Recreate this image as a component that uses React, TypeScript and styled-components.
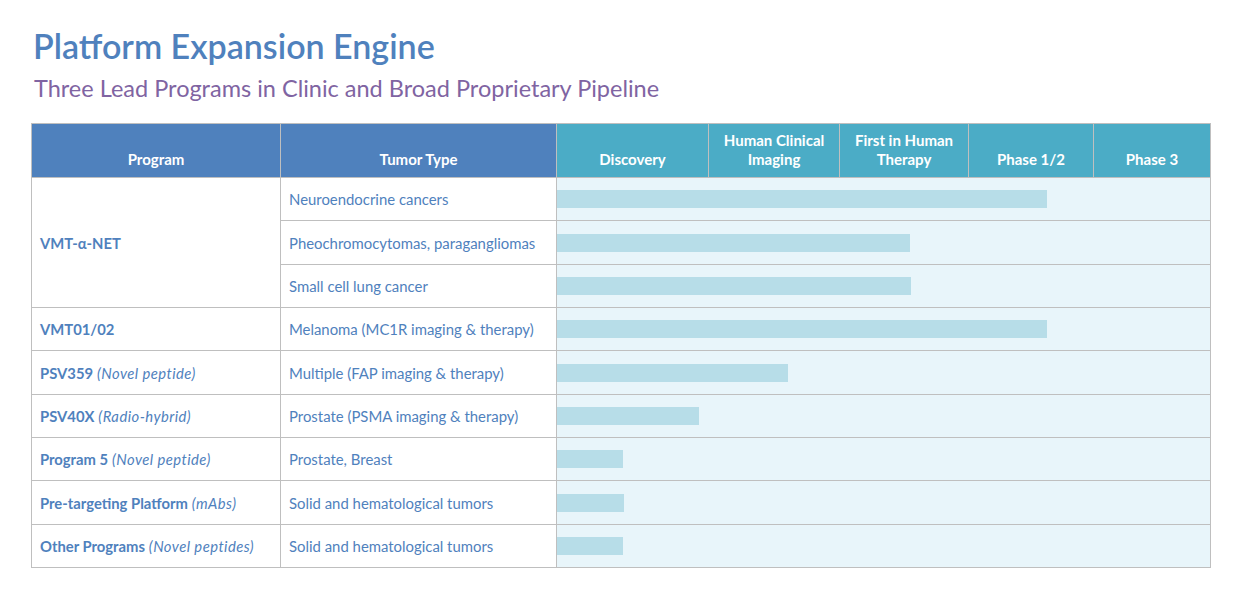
import styled, { createGlobalStyle } from 'styled-components'

const GlobalStyle = createGlobalStyle`
  body {
    margin: 0;
    background: #ffffff;
    font-family: Lato, "Open Sans", sans-serif;
  }
`

type Program = {
  name: string
  note?: string
  tumors: { label: string; bar: number }[]
}

const programs: Program[] = [
  {
    name: 'VMT-α-NET',
    tumors: [
      { label: 'Neuroendocrine cancers', bar: 490 },
      { label: 'Pheochromocytomas, paragangliomas', bar: 353 },
      { label: 'Small cell lung cancer', bar: 354 },
    ],
  },
  {
    name: 'VMT01/02',
    tumors: [{ label: 'Melanoma (MC1R imaging & therapy)', bar: 490 }],
  },
  {
    name: 'PSV359',
    note: '(Novel peptide)',
    tumors: [{ label: 'Multiple (FAP imaging & therapy)', bar: 231 }],
  },
  {
    name: 'PSV40X',
    note: '(Radio-hybrid)',
    tumors: [{ label: 'Prostate (PSMA imaging & therapy)', bar: 142 }],
  },
  {
    name: 'Program 5',
    note: '(Novel peptide)',
    tumors: [{ label: 'Prostate, Breast', bar: 66 }],
  },
  {
    name: 'Pre-targeting Platform',
    note: '(mAbs)',
    tumors: [{ label: 'Solid and hematological tumors', bar: 67 }],
  },
  {
    name: 'Other Programs',
    note: '(Novel peptides)',
    tumors: [{ label: 'Solid and hematological tumors', bar: 66 }],
  },
]

const phases = [
  { label: ['Discovery'], width: 152 },
  { label: ['Human Clinical', 'Imaging'], width: 131 },
  { label: ['First in Human', 'Therapy'], width: 129 },
  { label: ['Phase 1/2'], width: 125 },
  { label: ['Phase 3'], width: 117 },
]

export default function App() {
  return (
    <Page>
      <GlobalStyle />
      <Title>Platform Expansion Engine</Title>
      <Subtitle>Three Lead Programs in Clinic and Broad Proprietary Pipeline</Subtitle>

      <PipelineTable>
        <colgroup>
          <col style={{ width: 249 }} />
          <col style={{ width: 276 }} />
          {phases.map((p) => (
            <col key={p.label.join(' ')} style={{ width: p.width }} />
          ))}
        </colgroup>
        <thead>
          <tr>
            <HeadCell>Program</HeadCell>
            <HeadCell>Tumor Type</HeadCell>
            {phases.map((p) => (
              <HeadCell key={p.label.join(' ')} $phase>
                {p.label.map((line, i) => (
                  <span key={line}>
                    {i > 0 && <br />}
                    {line}
                  </span>
                ))}
              </HeadCell>
            ))}
          </tr>
        </thead>
        <tbody>
          {programs.map((program) =>
            program.tumors.map((tumor, i) => (
              <tr key={program.name + tumor.label}>
                {i === 0 && (
                  <ProgramCell rowSpan={program.tumors.length}>
                    <strong>{program.name}</strong>
                    {program.note && <em> {program.note}</em>}
                  </ProgramCell>
                )}
                <TumorCell>{tumor.label}</TumorCell>
                <ChartCell colSpan={5}>
                  <Bar style={{ width: tumor.bar }} />
                </ChartCell>
              </tr>
            ))
          )}
        </tbody>
      </PipelineTable>
    </Page>
  )
}

const Page = styled.div`
  padding: 26px 0 0 31px;
  width: 1179px;
`

const Title = styled.h1`
  margin: 0 0 0 2px;
  font-size: 34px;
  line-height: 40px;
  font-weight: 600;
  color: #4f81bd;
`

const Subtitle = styled.h2`
  margin: 8px 0 0 3px;
  font-size: 23.5px;
  line-height: 28px;
  font-weight: 400;
  color: #8064a2;
`

const PipelineTable = styled.table`
  margin-top: 21px;
  width: 1179px;
  table-layout: fixed;
  border-collapse: collapse;
  border: 1px solid #bfbfbf;
`

const HeadCell = styled.th<{ $phase?: boolean }>`
  height: 45px;
  padding: 0 4px 8px;
  vertical-align: bottom;
  text-align: center;
  font-size: 15px;
  line-height: 19px;
  font-weight: 700;
  color: #ffffff;
  background: ${(props) => (props.$phase ? '#4bacc6' : '#4f81bd')};
  border: 1px solid #bfbfbf;
`

const ProgramCell = styled.td`
  padding: 0 8px;
  font-size: 14.8px;
  color: #4f81bd;
  background: #ffffff;
  border: 1px solid #bfbfbf;
  white-space: nowrap;

  > strong {
    font-weight: 700;
  }

  > em {
    font-style: italic;
    letter-spacing: 0.45px;
  }
`

const TumorCell = styled.td`
  height: 42.35px;
  padding: 0 8px;
  font-size: 14.9px;
  color: #4f81bd;
  background: #ffffff;
  border: 1px solid #bfbfbf;
  white-space: nowrap;
`

const ChartCell = styled.td`
  padding: 0;
  background: #e8f5fa;
  border: 1px solid #bfbfbf;
  vertical-align: middle;
`

const Bar = styled.div`
  height: 18px;
  background: #b7dde8;
`
